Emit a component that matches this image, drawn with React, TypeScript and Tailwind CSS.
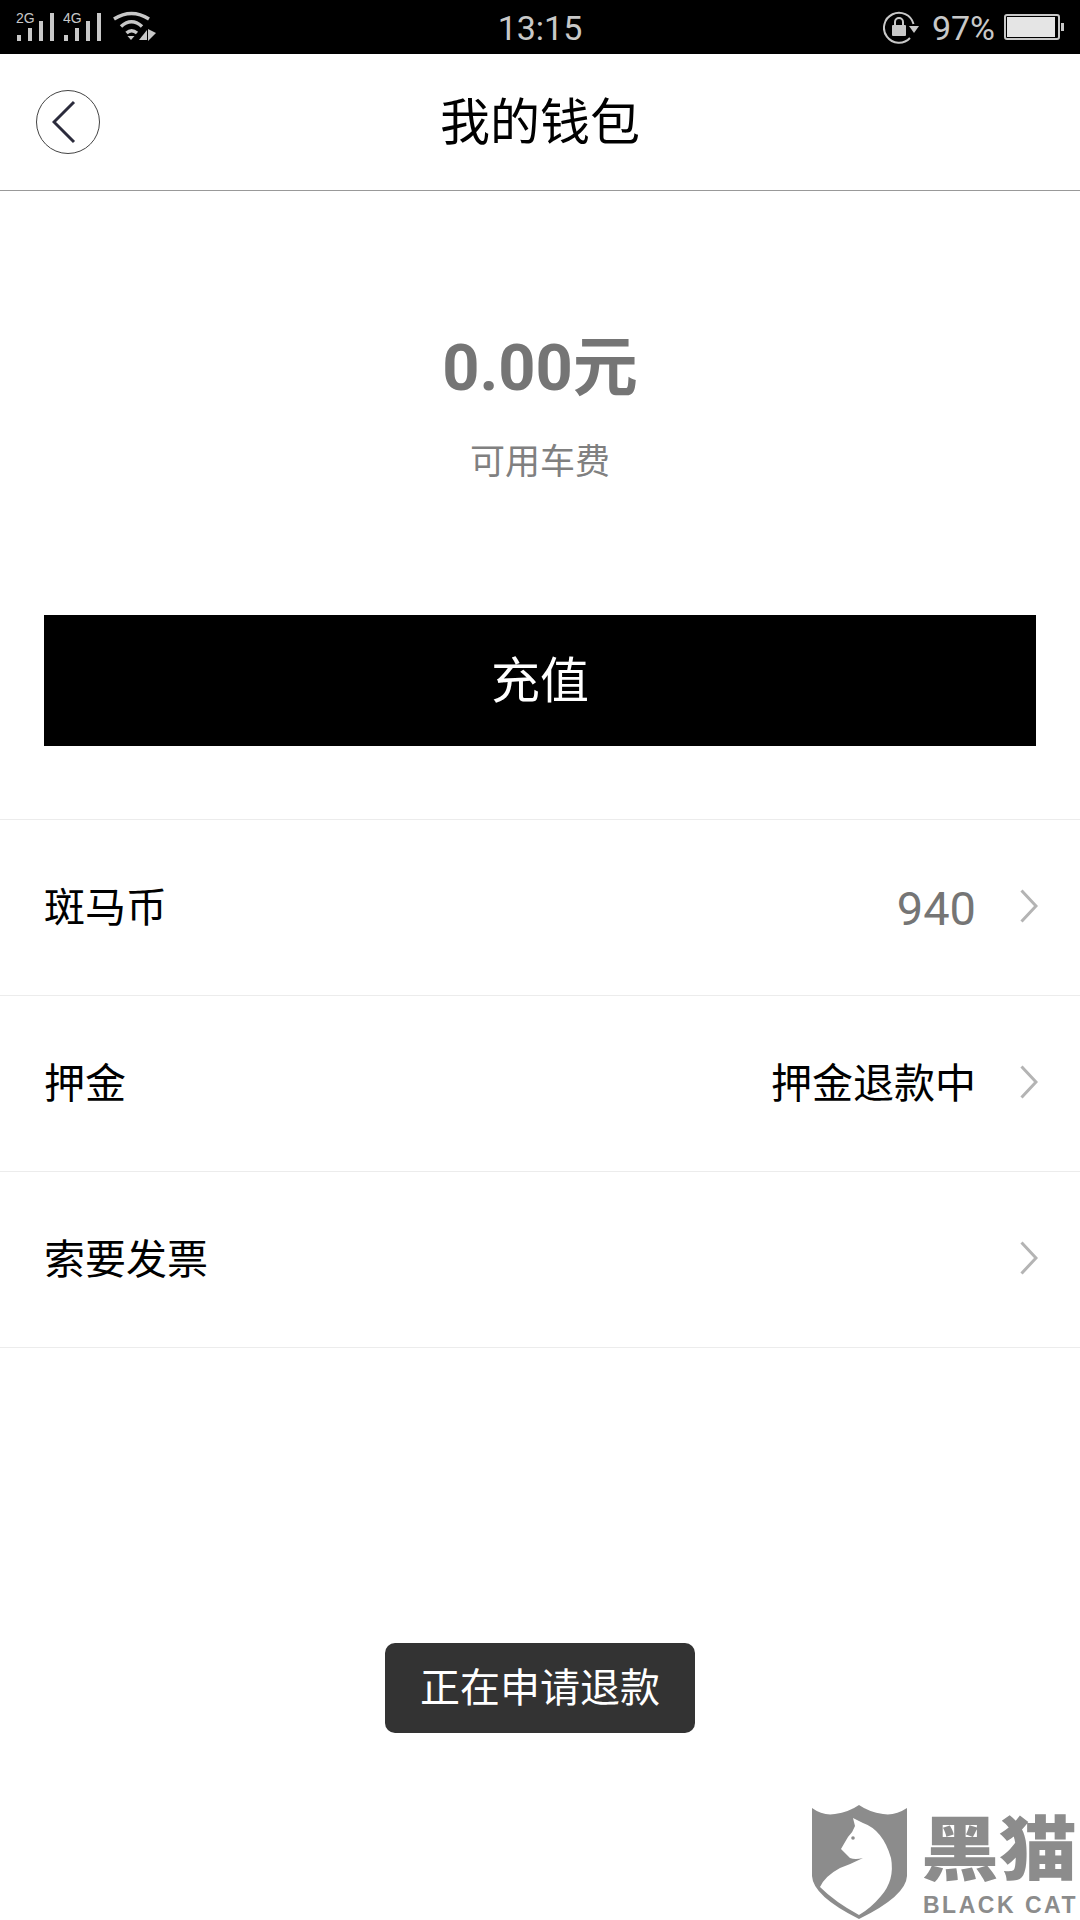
const sans = "font-['Roboto','Noto_Sans_CJK_SC',sans-serif]";

function SignalIcon({ label }: { label: string }) {
  return (
    <svg width="40" height="34" viewBox="0 -2 40 34" fill="#c8c8c8">
      <text x="0" y="11" fontSize="14" fontFamily="Liberation Sans, sans-serif">
        {label}
      </text>
      <rect x="1" y="23" width="4" height="6" />
      <rect x="12" y="16" width="4" height="13" />
      <rect x="23" y="9" width="4" height="20" />
      <rect x="34" y="1" width="4" height="28" />
    </svg>
  );
}

function WifiIcon() {
  return (
    <svg width="46" height="32" viewBox="0 0 46 32" fill="none" stroke="#c8c8c8" strokeWidth="3.5" className="ml-[2px]">
      <path d="M2 8 Q19.5 -3 37 8" />
      <path d="M9 15.5 Q19.5 6 30 15.5" />
      <path d="M14.5 22 Q19.5 17.5 25 22" />
      <path d="M15.5 25 L22.5 25 L19 29 Z" fill="#c8c8c8" stroke="none" />
      <path d="M35 19 L35 29 L27 29 Z" fill="#c8c8c8" stroke="none" />
      <path d="M36 18 L36 30 L44 22 Z" fill="#c8c8c8" stroke="none" />
    </svg>
  );
}

function RotateLockIcon() {
  return (
    <svg width="37" height="33" viewBox="0 0 37 33">
      <path d="M27 27 A15 15 0 1 1 30.5 13" fill="none" stroke="#c8c8c8" strokeWidth="2" />
      <path d="M26 15 L36 15 L31 22 Z" fill="#c8c8c8" />
      <rect x="9" y="14" width="14" height="11" rx="1" fill="#c8c8c8" />
      <path d="M12 14 V11 A4 4 0 0 1 20 11 V14" fill="none" stroke="#c8c8c8" strokeWidth="2" />
    </svg>
  );
}

function Battery() {
  return (
    <div className="flex items-center">
      <div className="w-[56px] h-[26px] rounded-[3px] border-2 border-[#c8c8c8] p-[1px]">
        <div className="w-[96%] h-full bg-[#e5e5e5]" />
      </div>
      <div className="w-[3px] h-[8px] ml-[1px] bg-[#c8c8c8]" />
    </div>
  );
}

function Chevron() {
  return (
    <svg width="18" height="34" viewBox="0 0 18 34" fill="none" stroke="#b4b4b4" strokeWidth="3" className="mb-[4px]">
      <path d="M1.5 1.5 L16 17 L1.5 32.5" />
    </svg>
  );
}

function Row({ title, value, valueClass }: { title: string; value?: string; valueClass?: string }) {
  return (
    <div className="h-[176px] flex items-center pl-[44px] pr-[42px] border-b border-[#ececec]">
      <span className="text-[41px] text-black pt-[3px]">{title}</span>
      <span className={`ml-auto mr-[44px] pt-[3px] ${valueClass}`}>{value}</span>
      <Chevron />
    </div>
  );
}

function Watermark() {
  return (
    <div className="absolute left-[811px] top-[1804px] flex gap-[14px] text-[#8c8c8c]">
      <svg width="98" height="116" viewBox="0 0 98 116">
        <path
          d="M1 4 Q12 12 24 10 Q38 8 48 1 Q58 8 72 10 Q84 12 96 4 V72 Q95 92 48 115 Q2 92 1 72 Z"
          fill="#8c8c8c"
        />
        <path
          d="M42 14 L52 19 Q72 26 80 54 Q84 76 70 92 Q60 104 48 111 Q24 98 9 83 Q14 72 29 64 Q40 60 52 54 Q44 56 39 54 L30 45 Q34 38 37 33 Q42 28 44 22 Z"
          fill="#ffffff"
        />
        <circle cx="42" cy="34" r="1.8" fill="#8c8c8c" />
      </svg>
      <div className="flex flex-col items-start">
        <span className="text-[78px] leading-[80px] font-black font-['Noto_Sans_CJK_SC',sans-serif] h-[88px] w-[156px] -ml-[2px] scale-y-90">
          黑猫
        </span>
        <span className="text-[23px] leading-[26px] font-bold tracking-[2.5px] whitespace-nowrap font-['Liberation_Sans',sans-serif]">
          BLACK CAT
        </span>
      </div>
    </div>
  );
}

export default function App() {
  return (
    <div className={`relative w-[1080px] h-[1920px] bg-white overflow-hidden ${sans}`}>
      <div className="h-[54px] bg-black relative flex items-center pl-[16px] pr-[16px] text-[#c8c8c8]">
        <div className="flex items-center gap-[7px]">
          <SignalIcon label="2G" />
          <SignalIcon label="4G" />
          <WifiIcon />
        </div>
        <span className="absolute left-0 right-0 text-center text-[34px] pt-[3px]">13:15</span>
        <div className="ml-auto flex items-center">
          <RotateLockIcon />
          <span className="text-[34px] ml-[12px] mr-[9px] pt-[3px]">97%</span>
          <Battery />
        </div>
      </div>

      <div className="h-[137px] relative flex items-center justify-center border-b border-[#999999]">
        <button className="absolute left-[36px] top-[36px] w-[64px] h-[64px] rounded-full border border-[#444444] flex items-center justify-center">
          <svg width="24" height="44" viewBox="0 0 24 44" fill="none" stroke="#2b2b3c" strokeWidth="3" className="mr-[8px]">
            <path d="M22 2 L2 22 L22 42" />
          </svg>
        </button>
        <h1 className="text-[50px] text-black pt-[3px]">我的钱包</h1>
      </div>

      <div className="h-[424px] flex flex-col items-center pt-[133px]">
        <div className="text-[65px] leading-[88px] font-bold text-[#757575]">0.00元</div>
        <div className="mt-[27px] text-[35px] leading-[48px] text-[#808080]">可用车费</div>
      </div>

      <div className="px-[44px]">
        <button className="w-full h-[131px] bg-black text-white text-[49px] pt-[3px]">充值</button>
      </div>

      <div className="mt-[73px] border-t border-[#ececec]">
        <Row title="斑马币" value="940" valueClass="text-[#757575] text-[47px]" />
        <Row title="押金" value="押金退款中" valueClass="text-black text-[41px]" />
        <Row title="索要发票" />
      </div>

      <div className="absolute left-[385px] top-[1643px] w-[310px] h-[90px] rounded-[10px] bg-[#333333] flex items-center justify-center text-white text-[40px] pt-[2px]">
        正在申请退款
      </div>

      <Watermark />
    </div>
  );
}
